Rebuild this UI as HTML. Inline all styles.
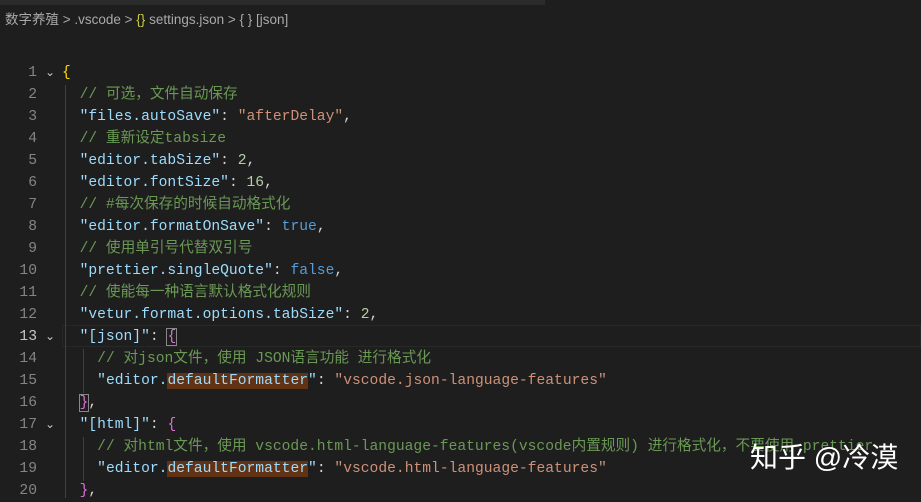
<!DOCTYPE html>
<html><head><meta charset="utf-8"><style>
body{margin:0;width:921px;height:496px;background:#1e1e1e;overflow:hidden;position:relative;font-family:"Liberation Mono","Noto Sans CJK SC",monospace;}
.top{position:absolute;left:0;top:0;width:545px;height:5px;background:#2b2b2b}
.bc{position:absolute;left:5px;top:8px;font:13.5px "Liberation Sans","Noto Sans CJK SC",sans-serif;color:#a9a9a9;white-space:pre}
.ln{position:absolute;left:0;width:37px;text-align:right;color:#858585;font-size:14.65px;line-height:22px}
.fold{position:absolute;left:45px;color:#c5c5c5;font-size:12px;line-height:22px}
.code{position:absolute;left:62px;font-size:14.65px;line-height:22px;white-space:pre;color:#d4d4d4}
.c{color:#6a9955}.k{color:#9cdcfe}.s{color:#ce9178}.n{color:#b5cea8}.b{color:#569cd6}.y{color:#ffd700}.p{color:#da70d6}
.hl{background:#613214}
.guide{position:absolute;width:1px;background:#404040}
.cur{position:absolute;left:62px;right:0;top:325px;height:20px;border:1px solid #282828}
.wm{position:absolute;left:750px;top:436px;font:28px "Liberation Sans","Noto Sans CJK SC",sans-serif;color:#fff}
</style></head><body>
<div class="top"></div>
<div class="bc">数字养殖 &gt; .vscode &gt; <span style="color:#cbcb41">{}</span> settings.json &gt; { } [json]</div>
<div class="cur"></div>
<div class="guide" style="left:65px;top:85px;height:413px"></div>
<div class="guide" style="left:83px;top:349px;height:44px"></div>
<div class="guide" style="left:83px;top:437px;height:44px"></div>
<div class="code" style="top:62px"><span class="y">{</span>
  <span class="c">// 可选，文件自动保存</span>
  <span class="k">"files.autoSave"</span>: <span class="s">"afterDelay"</span>,
  <span class="c">// 重新设定tabsize</span>
  <span class="k">"editor.tabSize"</span>: <span class="n">2</span>,
  <span class="k">"editor.fontSize"</span>: <span class="n">16</span>,
  <span class="c">// #每次保存的时候自动格式化</span>
  <span class="k">"editor.formatOnSave"</span>: <span class="b">true</span>,
  <span class="c">// 使用单引号代替双引号</span>
  <span class="k">"prettier.singleQuote"</span>: <span class="b">false</span>,
  <span class="c">// 使能每一种语言默认格式化规则</span>
  <span class="k">"vetur.format.options.tabSize"</span>: <span class="n">2</span>,
  <span class="k">"[json]"</span>: <span class="p" style="outline:1px solid #888">{</span>
    <span class="c">// 对json文件，使用 JSON语言功能 进行格式化</span>
    <span class="k">"editor.<span class="hl">defaultFormatter</span>"</span>: <span class="s">"vscode.json-language-features"</span>
  <span class="p" style="outline:1px solid #888">}</span>,
  <span class="k">"[html]"</span>: <span class="p">{</span>
    <span class="c">// 对html文件，使用 vscode.html-language-features(vscode内置规则) 进行格式化，不要使用 prettier</span>
    <span class="k">"editor.<span class="hl">defaultFormatter</span>"</span>: <span class="s">"vscode.html-language-features"</span>
  <span class="p">}</span>,</div>
<div class="ln" style="top:62px">1<br>2<br>3<br>4<br>5<br>6<br>7<br>8<br>9<br>10<br>11<br>12<br><span style="color:#c6c6c6">13</span><br>14<br>15<br>16<br>17<br>18<br>19<br>20</div>
<div class="fold" style="top:62px">⌄</div>
<div class="fold" style="top:326px">⌄</div>
<div class="fold" style="top:414px">⌄</div>
<div class="wm">知乎 @冷漠</div>
</body></html>
